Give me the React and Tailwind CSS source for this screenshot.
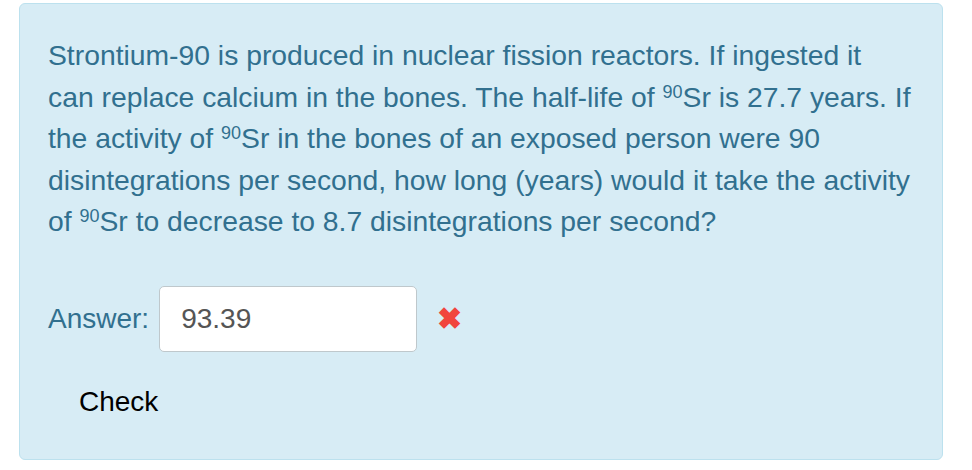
export default function App() {
  return (
    <div className="min-h-screen bg-white pt-[3px] pl-[19px]" style={{ fontFamily: '"Liberation Sans", Arial, sans-serif' }}>
      <div className="w-[924px] h-[457px] rounded-[6px] border border-[#bce1ee] bg-[#d7ecf5] pl-[28px] pr-[20px] pt-[31px] text-[#31708f]">
        <p className="whitespace-nowrap text-[28.3px] leading-[41.5px]">
          Strontium-90 is produced in nuclear fission reactors. If ingested it
          <br />
          can replace calcium in the bones. The half-life of <sup className="text-[18px]">90</sup>Sr is 27.7 years. If
          <br />
          the activity of <sup className="text-[18px]">90</sup>Sr in the bones of an exposed person were 90
          <br />
          disintegrations per second, how long (years) would it take the activity
          <br />
          of <sup className="text-[18px]">90</sup>Sr to decrease to 8.7 disintegrations per second?
        </p>
        <div className="mt-[43px] flex items-center">
          <span className="text-[28px]">Answer:</span>
          <input
            className="ml-[10px] h-[66px] w-[258px] rounded-[5px] border border-[#bfc8cc] bg-white px-[21px] text-[28px] text-[#555555] outline-none"
            defaultValue="93.39"
          />
          <span className="ml-[20px] text-[30px] font-bold leading-none text-[#f1453d]">✖</span>
        </div>
        <button className="mt-[15px] ml-[16px] px-[15px] py-[14px] text-[28px] text-black">Check</button>
      </div>
    </div>
  );
}
